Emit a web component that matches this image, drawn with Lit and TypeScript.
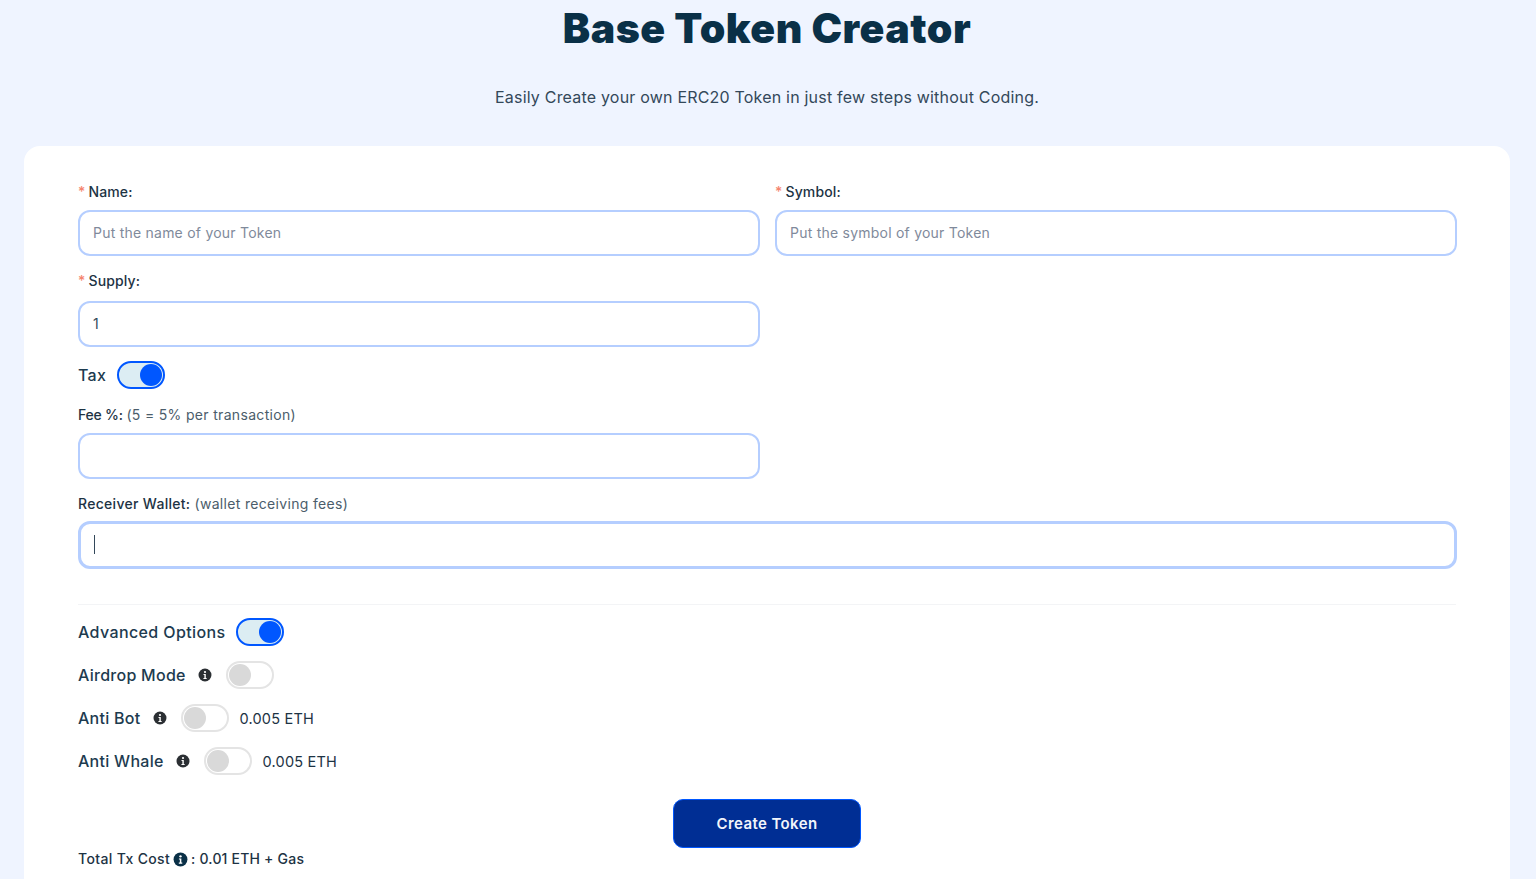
import { LitElement, html, css } from "lit";
import { customElement } from "lit/decorators.js";

const info = () => html`<svg class="info" viewBox="0 0 16 16" aria-hidden="true">
  <circle cx="8" cy="8" r="7.4" fill="currentColor"></circle>
  <circle cx="8" cy="4.6" r="1.25" fill="#fff"></circle>
  <path d="M6.3 6.9h2.6v4.4h1v1.2H6.2v-1.2h1.1V8.1h-1z" fill="#fff"></path>
</svg>`;

@customElement("app-root")
export class AppRoot extends LitElement {
  static styles = css`
    :host {
      display: block;
      height: 879px;
      overflow: hidden;
      background: #eff4ff;
      font-family: "Inter", "Noto Sans", sans-serif;
      color: #0a3047;
      box-sizing: border-box;
    }
    h1 {
      margin: 0;
      padding: 3px 2px 0 0;
      height: 50px;
      font-size: 41px;
      line-height: 50px;
      font-weight: 900;
      letter-spacing: 0.5px;
      text-align: center;
      color: #0a3047;
    }
    .sub {
      margin: 32px 0 0;
      padding-right: 2px;
      height: 24px;
      line-height: 24px;
      font-size: 16px;
      letter-spacing: 0.2px;
      text-align: center;
      color: #33485a;
    }
    .card {
      margin: 37px 26px 0 24px;
      padding: 36px 54px 0;
      height: 760px;
      box-sizing: border-box;
      background: #fff;
      border-radius: 16px;
    }
    .grid {
      display: grid;
      grid-template-columns: 682px 682px;
      column-gap: 15px;
    }
    .field { display: flex; flex-direction: column; }
    .supply { margin-top: 15px; }
    .supply label.l { margin-bottom: 10px; }
    .wallet { margin-top: 15px; }
    .wallet label.l { margin-bottom: 7px; letter-spacing: 0.3px; }
    label.l {
      height: 20px;
      line-height: 20px;
      font-size: 14px;
      font-weight: 500;
      letter-spacing: 0.15px;
      color: #1d3344;
      margin-bottom: 8px;
    }
    label.l .opt { font-weight: 400; letter-spacing: 0.32px; color: #4b5d6b; }
    .fee label.l { letter-spacing: -0.2px; }
    .req { color: #f5846e; margin-right: 3px; }
    .input {
      height: 46px;
      box-sizing: border-box;
      border: 2px solid #b5ceff;
      border-radius: 12px;
      background: #fff;
      padding: 0 13px 1px;
      font: 400 14px "Inter", sans-serif;
      letter-spacing: 0.23px;
      color: #33485a;
      outline: none;
      width: 100%;
    }
    .input::placeholder { color: #7f8a9b; opacity: 1; }
    .focus {
      height: 48px;
      border-width: 3px;
      display: flex;
      align-items: center;
      width: 1379px;
    }
    .caret { width: 1px; height: 19px; background: #33485a; }
    .row {
      display: flex;
      align-items: center;
      height: 28px;
      font-size: 16px;
      font-weight: 500;
      letter-spacing: 0.27px;
      color: #1d3b4f;
      white-space: nowrap;
    }
    .tax { margin-top: 14px; margin-bottom: 16px; }
    .adv { letter-spacing: 0.38px; }
    .row .price { font-size: 14.5px; font-weight: 400; letter-spacing: 0.2px; margin-left: 11px; color: #1d3344; }
    .row .info { margin-left: 12px; margin-right: 14px; }
    .info { width: 14px; height: 14px; color: #2b2f33; flex: none; display: block; }
    .toggle {
      width: 48px;
      height: 28px;
      box-sizing: border-box;
      border-radius: 14px;
      border: 2px solid #e4e4e4;
      background: #fff;
      display: flex;
      align-items: center;
      padding: 0 1px;
      flex: none;
    }
    .toggle i { width: 22px; height: 22px; border-radius: 50%; background: #d9d9d9; display: block; }
    .toggle.on {
      border-color: #0057ff;
      background: #dcedf3;
      justify-content: flex-end;
    }
    .toggle.on i { background: #0057ff; }
    .row > .label + .toggle { margin-left: 11px; }
    hr {
      border: 0;
      height: 1px;
      background: #f3f4f6;
      margin: 35px 0 13px;
    }
    .stack { display: flex; flex-direction: column; gap: 15px; }
    .btn {
      display: block;
      margin: 24px auto 0;
      width: 188px;
      height: 49px;
      box-sizing: border-box;
      border: 1px solid #0057ff;
      border-radius: 10px;
      background: #002e94;
      color: #f2f5fb;
      font: 600 15px "Inter", sans-serif;
      letter-spacing: 0.4px;
    }
    .total {
      display: flex;
      align-items: center;
      height: 20px;
      font-size: 14px;
      font-weight: 500;
      letter-spacing: 0.35px;
      color: #1d3344;
      white-space: pre;
    }
    .total .cost { letter-spacing: 0.2px; }
    .total .info { color: #0a3047; margin: 2px 3px 0 3px; width: 15px; height: 15px; }
  `;

  render() {
    return html`
      <h1>Base Token Creator</h1>
      <p class="sub">Easily Create your own ERC20 Token in just few steps without Coding.</p>
      <section class="card">
        <div class="grid">
          <div class="field">
            <label class="l"><span class="req">*</span>Name:</label>
            <input class="input" placeholder="Put the name of your Token" />
          </div>
          <div class="field">
            <label class="l"><span class="req">*</span>Symbol:</label>
            <input class="input" placeholder="Put the symbol of your Token" />
          </div>
          <div class="field supply">
            <label class="l"><span class="req">*</span>Supply:</label>
            <input class="input" .value=${"1"} />
          </div>
        </div>
        <div class="row tax">
          <span class="label">Tax</span><span class="toggle on"><i></i></span>
        </div>
        <div class="grid">
          <div class="field fee">
            <label class="l">Fee %: <span class="opt">(5 = 5% per transaction)</span></label>
            <input class="input" />
          </div>
        </div>
        <div class="field wallet">
          <label class="l">Receiver Wallet: <span class="opt">(wallet receiving fees)</span></label>
          <div class="input focus"><span class="caret"></span></div>
        </div>
        <hr />
        <div class="stack">
          <div class="row adv"><span class="label">Advanced Options</span><span class="toggle on"><i></i></span></div>
          <div class="row"><span class="label">Airdrop Mode</span>${info()}<span class="toggle"><i></i></span></div>
          <div class="row"><span class="label">Anti Bot</span>${info()}<span class="toggle"><i></i></span><span class="price">0.005 ETH</span></div>
          <div class="row"><span class="label">Anti Whale</span>${info()}<span class="toggle"><i></i></span><span class="price">0.005 ETH</span></div>
        </div>
        <button class="btn">Create Token</button>
        <div class="total">Total Tx Cost${info()}<span class="cost">: 0.01 ETH + Gas</span></div>
      </section>
    `;
  }
}
